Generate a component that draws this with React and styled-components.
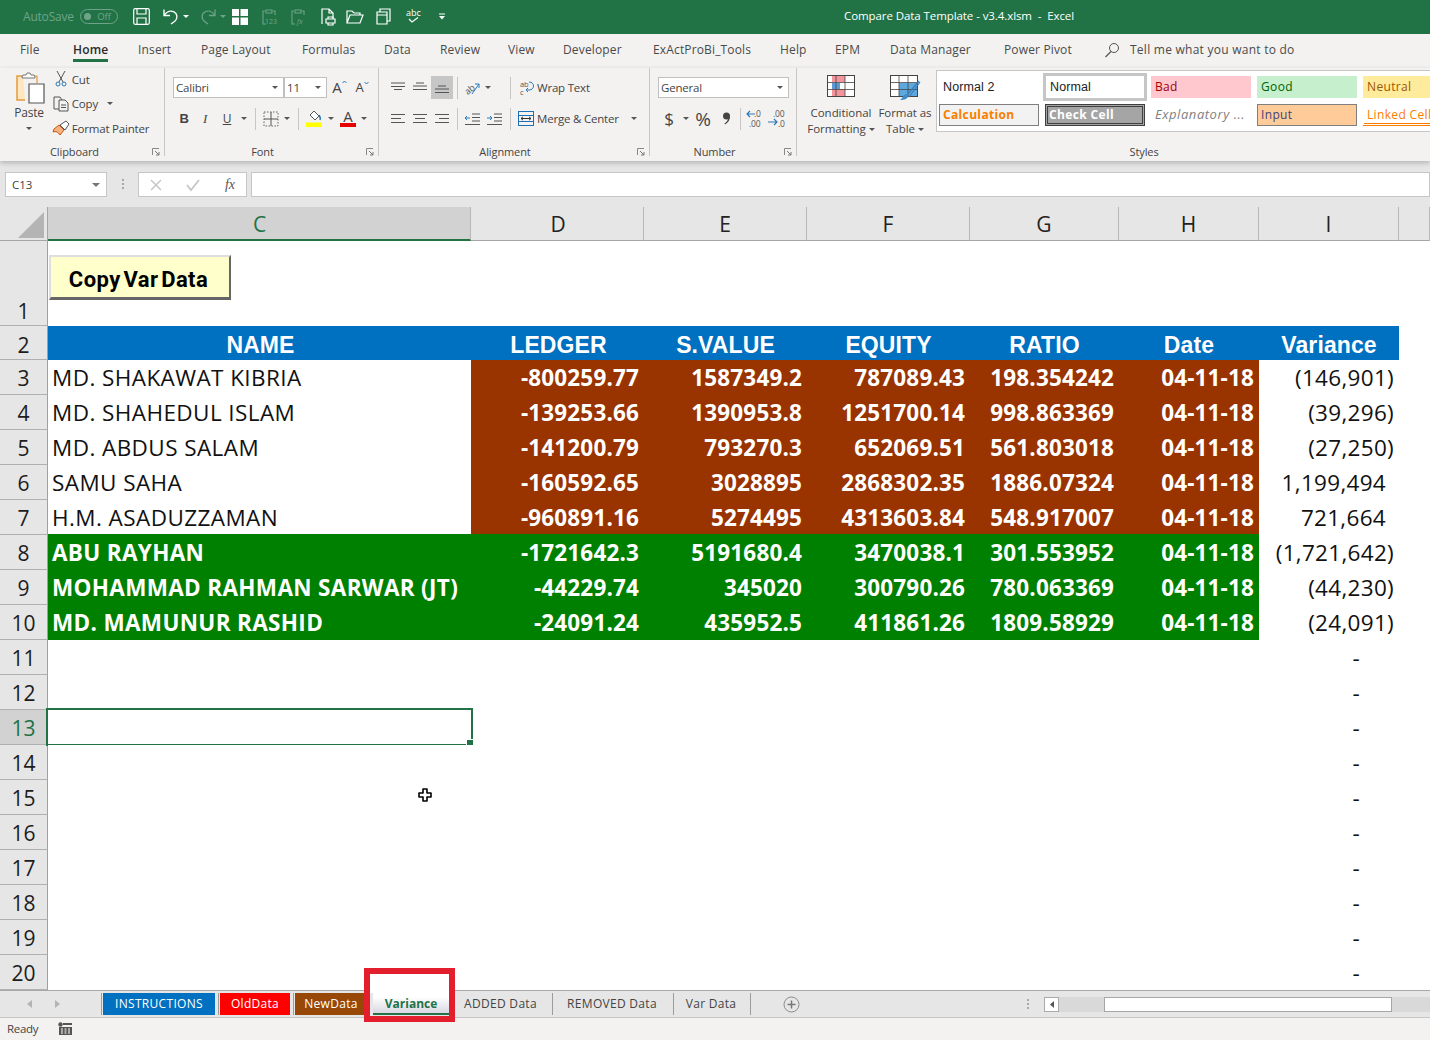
import React from "react";
import styled, { createGlobalStyle } from "styled-components";

const Global = createGlobalStyle`
  html, body { margin: 0; padding: 0; background: #fff; overflow: hidden; }
  * { box-sizing: border-box; }
`;
const UI = `"Open Sans", "Noto Sans", sans-serif`;
const GREEN = "#217346";

const Page = styled.div`
  width: 1430px; height: 1040px; display: flex; flex-direction: column; position: relative; overflow: hidden;
  font-family: ${UI}; color: #444;
`;
const TitleBar = styled.div`
  height: 34px; flex: none; background: ${GREEN}; display: flex; align-items: center; position: relative; padding: 0 0 1px 23px; color: #fff;
`;
const AutoSave = styled.span`font-size: 12px; letter-spacing: -.2px; color: #6fa388; width: 57px;`;
const Toggle = styled.span`
  width: 38px; height: 15px; border: 1px solid #6fa388; border-radius: 8px; display: flex; align-items: center; justify-content: space-between;
  padding: 0 6px 0 3px; font-size: 9.5px; color: #6fa388; margin-right: 15px;
  &::before { content: ""; width: 7px; height: 7px; border-radius: 50%; background: #6fa388; }
`;
const QSlot = styled.span`width: ${p => p.$w}px; flex: none; display: flex; justify-content: center; align-items: center; height: 24px;`;
const DocTitle = styled.div`position: absolute; left: 844px; top: 8px; font-size: 11.5px; letter-spacing: -.08px; white-space: pre; color: #fff;`;
const TabRow = styled.div`height: 34px; flex: none; background: #f3f2f1; display: flex; padding-left: 20px; font-size: 12px;`;
const Tab = styled.div`
  width: ${p => p.$w}px; flex: none; padding-top: 7px; color: ${p => p.$active ? "#2b2b2b" : "#4a4a4a"}; font-weight: ${p => p.$active ? 600 : 400}; white-space: nowrap; letter-spacing: .15px;
  span { display: inline-block; height: 21px; border-bottom: ${p => p.$active ? `3px solid ${GREEN}` : "0"}; }
`;
const SearchBox = styled.div`display: flex; align-items: center; gap: 10px; height: 17px; letter-spacing: .25px; color: #4a4a4a; margin-top: 7px;`;
const Ribbon = styled.div`
  height: 93px; flex: none; background: #f3f2f1; display: flex; box-shadow: 0 2px 5px rgba(0,0,0,.22); position: relative; z-index: 2; font-size: 11.5px; letter-spacing: -.2px;
`;
const Group = styled.div`
  width: ${p => p.$w}px; flex: none; position: relative; display: flex; flex-direction: column; height: 88px;
  border-right: ${p => p.$last ? "0" : "1px solid #c8c6c4"};
`;
const Body = styled.div`flex: none; height: 76px; display: ${p => p.$row ? "flex" : "block"}; padding-top: ${p => p.$pt ?? 9}px;`;
const GLabel = styled.div`
  height: 15px; line-height: 15px; text-align: center; font-size: 11px; letter-spacing: -.1px; color: #444; padding-right: ${p => p.$pr ?? 0}px; white-space: nowrap;
  margin-left: ${p => p.$ml ?? 0}px; width: ${p => p.$lw ? p.$lw + "px" : "auto"};
`;
const Launcher = styled.svg`position: absolute; right: 4px; bottom: 0; width: 8px; height: 8px;`;
const PasteCol = styled.div`width: 52px; flex: none; display: flex; flex-direction: column; align-items: center; padding-left: 6px; font-size: 12px; line-height: 14px;`;
const PasteIcon = styled.span`display: block; height: 31px; margin-left: 4px;`;
const PasteText = styled.span`margin-top: 3px;`;
const PasteCaret = styled.span`margin-top: 7px;`;
const ClipList = styled.div`display: flex; flex-direction: column; margin-top: -5px;`;
const ClipItem = styled.div`height: 24.5px; display: flex; align-items: center; white-space: nowrap; span:first-child { width: 17px; display: flex; justify-content: center; }`;
const CRow = styled.div`display: flex; align-items: center; height: 21px; padding-left: ${p => p.$pl ?? 0}px; margin-bottom: 10px; white-space: nowrap;`;
const Slot = styled.span`
  width: ${p => p.$w}px; flex: none; height: 100%; display: flex; align-items: center; justify-content: ${p => p.$start ? "flex-start" : "center"};
  background: ${p => p.$on ? "#c6c6c6" : "transparent"}; color: #444; white-space: nowrap;
  ${p => p.$on ? "margin-top:-1px;height:23px;" : ""}
`;
const Glyph = styled(Slot)`
  font-size: ${p => p.$size}px; font-weight: ${p => p.$weight ?? 400}; font-family: ${p => p.$family ?? UI};
  font-style: ${p => p.$italic ? "italic" : "normal"}; text-decoration: ${p => p.$under ? "underline" : "none"};
`;
const VSep = styled.span`width: 1px; height: 22px; background: #c8c6c4; display: block;`;
const Drop = styled.div`
  width: ${p => p.$w}px; height: 21px; flex: none; background: #fff; border: 1px solid #c0c0c0; display: flex; align-items: center; justify-content: space-between; padding: 0 5px 0 2px; color: #444; letter-spacing: -.2px;
`;
const Caret = styled.i`display: block; width: 0; height: 0; border-left: ${p => p.$big ? 4 : 3}px solid transparent; border-right: ${p => p.$big ? 4 : 3}px solid transparent; border-top: ${p => p.$big ? 4 : 3}px solid ${p => p.$big ? "#777" : "#555"}; flex: none;`;
const StyleBtn = styled.div`
  width: ${p => p.$w}px; flex: none; display: flex; flex-direction: column; align-items: center; line-height: 16px; font-size: 11.5px; letter-spacing: -.05px; white-space: nowrap; padding-top: 7px; gap: 6px;
  b { font-weight: 400; display: flex; align-items: center; justify-content: center; gap: 3px; }
`;
const BtnText = styled.span`margin-top: ${p => p.$mt}px; text-align: center;`;
const Gallery = styled.div`
  margin-top: 2px; width: 495px; height: 62px; border: 1px solid #c6c6c6; border-right: 0; background: #fff; display: grid;
  grid-template-columns: repeat(5, 100px); column-gap: 6px; row-gap: 6px; padding: 5px 0 0 2px; overflow: hidden; grid-auto-rows: 22px; font-size: 12px; letter-spacing: .35px;
`;
const Sw = styled.div`
  height: 22px; line-height: 20px; padding-left: 3px; white-space: nowrap; overflow: hidden; position: relative;
  background: ${p => p.$bg || "#fff"}; color: ${p => p.$c || "#222"}; border: ${p => p.$bd ? `1px solid ${p.$bd}` : "1px solid transparent"};
  font-weight: ${p => p.$b ? 700 : 400}; font-style: ${p => p.$i ? "italic" : "normal"};
  ${p => p.$i ? "font-size: 13px; letter-spacing: .55px; line-height: 18px;" : ""}
  ${p => p.$ring ? "outline: 3px solid #c6c6c6; outline-offset: 0; margin: 0 1px;" : ""}
  ${p => p.$double ? "box-shadow: inset 0 0 0 1px #a5a5a5, inset 0 0 0 2px #3f3f3f; border: 1px solid #3f3f3f;" : ""}
  ${p => p.$under ? `border-bottom: 3px double ${p.$under}; line-height:20px;` : ""}
  ${p => p.$arial ? `font-family: "Liberation Sans", sans-serif; font-size: 12.5px; letter-spacing: .1px;` : ""}
`;
const FormulaBar = styled.div`height: 46px; flex: none; background: #e6e6e6; display: flex; align-items: flex-start; padding: 11px 0 0 5px;`;
const FBox = styled.div`
  width: ${p => p.$w ? p.$w + "px" : "auto"}; ${p => p.$w ? "flex:none;" : "flex:1;"} height: 25px; background: #fff; border: 1px solid #c6c6c6; display: flex; align-items: center; font-size: 11.5px; color: #444;
  justify-content: ${p => p.$sb ? "space-between" : "flex-start"}; padding: 0 ${p => p.$px ?? 6}px; margin-right: ${p => p.$mr ?? 0}px;
`;
const Fx = styled.span`font: italic 14px "Liberation Serif", serif; color: #555;`;
const Dots = styled.span`width: 2px; height: 10px; margin: 7px 14px 0 15px; flex: none; background: repeating-linear-gradient(#a6a6a6 0 2px, transparent 2px 4px);`;
const Sheet = styled.div`
  height: 783px; flex: none; position: relative; display: grid; background: #fff;
  grid-template-columns: 48px 423px 173px 163px 163px 149px 140px 140px 31px;
  grid-template-rows: 34px 85px 34px repeat(18, 35px);
  overflow: hidden;
`;
const Corner = styled.div`
  background: #e6e6e6; border-bottom: 1px solid #a6a6a6; border-right: 1px solid #a6a6a6; padding: 5px 0 0 18px; 
  &::before { content: ""; display: block; width: 0; height: 0; border-left: 26px solid transparent; border-bottom: 26px solid #b4b4b4; }
`;
const ColHead = styled.div`
  background: ${p => p.$sel ? "#d2d2d2" : "#e6e6e6"}; color: ${p => p.$sel ? GREEN : "#222"}; font-size: 21px; line-height: 34px; text-align: center; padding-left: ${p => p.$pl ?? 0}px;
  border-bottom: ${p => p.$sel ? `2px solid ${GREEN}` : "1px solid #a6a6a6"}; border-right: 1px solid #b8b8b8;
`;
const RowHead = styled.div`
  background: ${p => p.$sel ? "#d2d2d2" : "#e6e6e6"}; color: ${p => p.$sel ? GREEN : "#1d1d1d"}; font-size: 21px; display: flex; align-items: flex-end; justify-content: center; line-height: ${p => p.$low ? 27 : 31}px;
  border-bottom: 1px solid #b0b0b0; border-right: 1px solid ${p => p.$sel ? GREEN : "#a0a0a0"};
`;
const Head = styled.div`
  background: #0070c0; color: #fff; font: 700 23px/38px "Liberation Sans", Arial, sans-serif; text-align: center; letter-spacing: .1px; padding-left: ${p => p.$pl ?? 0}px;
`;
const Cell = styled.div`
  background: ${p => p.$bg || "#fff"}; color: ${p => p.$bg ? "#fff" : "#111"}; font-size: 22.5px; line-height: 35px; font-weight: ${p => p.$bold ? 700 : 400}; letter-spacing: ${p => p.$ls ?? .15}px;
  text-align: ${p => p.$left ? "left" : "right"}; padding: ${p => p.$left ? "0 0 0 4px" : `0 ${p.$pr ?? 5}px 0 0`}; white-space: nowrap; position: relative;
  ${p => p.$span ? `grid-column: span ${p.$span};` : ""}
  ${p => p.$lift ? `box-shadow: 0 -1px 0 ${p.$bg};` : ""}
`;
const Selection = styled.div`
  position: absolute; left: -2px; width: 427px; top: -2px; bottom: -1px; border: 2px solid ${GREEN};
  &::after { content: ""; position: absolute; right: -2px; bottom: -3px; width: 6px; height: 6px; background: ${GREEN}; border: 1px solid #fff; border-right: 0; }
`;
const CopyBtn = styled.div`
  position: absolute; left: 49px; top: 48px; width: 182px; height: 45px; background: #ffffcc; border-top: 2px solid #dedede; border-left: 2px solid #dedede; border-right: 2px solid #666; border-bottom: 3px solid #666; padding-right: 3px;
  font: 700 22px/46px Roboto, sans-serif; color: #000; text-align: center; letter-spacing: .4px; word-spacing: -3px;
`;
const Cursor = styled.svg`position: absolute; left: 418px; top: 581px;`;
const SheetBar = styled.div`
  height: 28px; flex: none; background: #e6e6e6; border-top: 1px solid #a8a8a8; border-bottom: 1px solid #c6c6c6; display: flex; align-items: center; font-size: 12px; letter-spacing: .3px; position: relative;
`;
const Nav = styled.span`width: 28px; flex: none; display: flex; justify-content: center; margin-left: ${p => p.$ml ?? 0}px;`;
const TabSep = styled.span`width: 1px; height: 22px; background: #9c9c9c; flex: none; margin: ${p => p.$m ?? "0 1px 0 0"};`;
const SheetTab = styled.div`
  width: ${p => p.$w}px; height: 22px; flex: none; margin-right: ${p => p.$mr ?? 3}px; padding-right: ${p => p.$pr ?? 0}px; line-height: 22px; text-align: center; white-space: nowrap; background: ${p => p.$bg || "transparent"}; color: ${p => p.$bg ? "#fff" : "#444"};
`;
const ActiveTab = styled(SheetTab)`
  background: linear-gradient(#fff, #fff 20%, #d9d7e2); color: ${GREEN}; font-weight: 700; border-bottom: 2px solid ${GREEN}; letter-spacing: 0; line-height: 22px;
`;
const Highlight = styled.div`
  position: absolute; left: 364px; top: 968px; width: 91px; height: 54px; border: 6px solid #e31e2d; z-index: 4;
  background: linear-gradient(#fff 0, #fff 19px, transparent 19px);
`;
const Scroller = styled.div`
  position: absolute; left: 1044px; top: 6px; right: 0; height: 15px; background: #d9d9d9; display: flex;
`;
const ScrollBtn = styled.span`width: 15px; background: #fff; border: 1px solid #aaa; display: flex; align-items: center; justify-content: center;`;
const Thumb = styled.span`width: 288px; margin-left: 45px; background: #fff; border: 1px solid #a6a6a6; display: block;`;
const BarDots = styled.span`position: absolute; left: 1027px; top: 8px; width: 2px; height: 12px; background: repeating-linear-gradient(#aaa 0 2px, transparent 2px 4px);`;
const Status = styled.div`height: 22px; flex: none; background: #f3f2f1; display: flex; align-items: center; padding: 0 0 2px 7px; font-size: 11.5px; letter-spacing: -.3px; gap: 20px; color: #444;`;
const BigAWrap = styled.span`display: flex; align-items: flex-start; font-size: ${p => p.$s}px; line-height: 1;`;
const FontColWrap = styled.span`display: flex; flex-direction: column; align-items: center; font-size: 15px; line-height: 13px; width: 16px; i { display: block; width: 16px; height: 4px; background: #e60000; }`;
const QCaretEl = styled.span`display: block; width: 0; height: 0; border-left: 3px solid transparent; border-right: 3px solid transparent; border-top: 3px solid ${p => p.$dim ? "#6fa388" : "#fff"};`;
const Flip = styled.span`display: block; height: 17px; transform: scaleX(-1);`;

const Svg = ({ w = 16, h = 16, children, ...r }) => <svg width={w} height={h} viewBox={`0 0 ${w} ${h}`} fill="none" overflow="visible" {...r}>{children}</svg>;
const WHITE = { stroke: "#fff", strokeWidth: 1.2 };
const DIM = { stroke: "#6fa388", strokeWidth: 1.1 };

const SaveI = () => <Svg w={17} h={17}><rect x=".7" y=".7" width="15.6" height="15.6" rx="1.5" {...WHITE} /><path d="M4 1v5h9V1M4 16v-6h9v6" {...WHITE} /></Svg>;
const UndoI = ({ st = WHITE }) => <Svg w={17} h={17}><path d="M2 1.5v6h6" {...st} strokeWidth={st.strokeWidth + .2} /><path d="M2.4 7C5 3 9 2.4 12 3.8c3.5 1.7 4 6.500.8 9.500L9 16" {...st} strokeWidth={st.strokeWidth + .2} /></Svg>;
const GridI = () => <Svg w={16} h={16}><path d="M0 0h7v7H0zM8.500 0H16v7H8.500zM0 8.500h7V16H0zM8.500 8.500H16V16H8.500z" fill="#fff" /></Svg>;
const DimClip = ({ t }) => <Svg w={15} h={17}><path d="M3 3H1v13h3M11 3h2v4M4 2h6v3H4zM7 1.500h0" {...DIM} /><text x={t === "fx" ? 6 : 3} y="15.500" fontSize="7" fontStyle={t === "fx" ? "italic" : "normal"} fill="#6fa388" fontFamily="Open Sans">{t}</text></Svg>;
const PrintI = () => <Svg w={17} h={18}><path d="M2 16V1h7l4 4v5M9 1v4h4" {...WHITE} /><path d="M6 11h9v4H6zM8 15v2h5v-2M8 11V9h5v2" {...WHITE} /></Svg>;
const OpenI = () => <Svg w={18} h={14}><path d="M1 13V1h5l2 2h6v2M1 13h13l3-8H4z" {...WHITE} /></Svg>;
const PagesI = () => <Svg w={15} h={17}><path d="M1 4h10v12H1zM4 4V1h10v12h-3M1 7h10" {...WHITE} /></Svg>;
const Abc = () => <Svg w={15} h={17}><text x="0" y="8" fontSize="9" fill="#fff" fontFamily="Open Sans">abc</text><path d="M3 11l3 3 6-4.500" {...WHITE} /></Svg>;
const QMenu = () => <Svg w={7} h={7}><path d="M0 1h6" stroke="#fff" /><path d="M0 3h6L3 6.500z" fill="#fff" /></Svg>;

const PasteI = () => <Svg w={30} h={31}><path d="M7 4H1v24h8" stroke="#e59a3c" strokeWidth="1.500" fill="#fde6c0" /><path d="M7 4h6v0h8v7" stroke="#e59a3c" strokeWidth="1.200" /><path d="M6 5l1-2h3l1-2h3l1 2h3l1 2v1H6z" fill="#fff" stroke="#777" /><path d="M13 12h15v19H13z" fill="#fff" stroke="#555" strokeWidth="1.200" /></Svg>;
const CutI = () => <Svg w={12} h={16}><path d="M2 0l6 11M10 0L4 11" stroke="#555" /><circle cx="3" cy="13" r="2" stroke="#2a7ab8" /><circle cx="9" cy="13" r="2" stroke="#2a7ab8" /></Svg>;
const CopyI = () => <Svg w={16} h={16}><path d="M6 13H1V1h6l2 3" stroke="#555" /><path d="M6 4h6l3 3v8H6z" stroke="#555" fill="#f3f2f1" /><path d="M8 9h5M8 11.500h5" stroke="#555" /></Svg>;
const PainterI = () => <Svg w={18} h={16}><path d="M2 9l5-4 5 5-4 5C6 12 4 11 1 12z" fill="#f4b183" stroke="#c55a11" /><path d="M8 5l6-4 3 3-4 6z" fill="#fff" stroke="#555" /></Svg>;
const BigA = ({ s, up }) => <BigAWrap $s={s}>A<Svg w={5} h={4}><path d={up ? "M.5 3l2-2 2 2" : "M.5 1l2 2 2-2"} stroke="#2a7ab8" /></Svg></BigAWrap>;
const BordersI = () => <Svg w={16} h={16}><rect x="1" y="1" width="14" height="14" stroke="#666" strokeDasharray="1.500 1.500" /><path d="M1 8h14M8 1v14" stroke="#555" /></Svg>;
const FillI = () => <Svg w={17} h={17}><path d="M8 1l5 5-4 4-5-5z" stroke="#555" fill="#fff" /><path d="M13 5c1 2 2 3 1 5" stroke="#1f6fb5" strokeWidth="1.500" /><rect x="0" y="12.500" width="16" height="4.500" fill="#ffff00" /></Svg>;
const FontColI = () => <FontColWrap>A<i /></FontColWrap>;
const Lines = ({ mode }) => {
  const widths = [14, 10, 14];
  const x = i => mode === "c" ? (14 - widths[i]) / 2 : mode === "r" ? 14 - widths[i] : 0;
  return <Svg w={14} h={12}>{[0, 1, 2].map(i => <path key={i} d={`M${x(i)} ${1.5 + i * 4}h${widths[i]}`} stroke="#555" />)}</Svg>;
};
const VLines = ({ pos }) => <Svg w={14} h={14}>{[0, 1].map(i => <path key={i} d={`M0 ${(pos === "t" ? 2 : pos === "m" ? 5 : 9) + i * 3.5}h14`} stroke="#555" />)}{pos === "t" ? <path d="M3 8.500h8" stroke="#555" /> : pos === "m" ? <path d="M3 2h8" stroke="#555" /> : <path d="M3 6h8" stroke="#555" />}</Svg>;
const OrientI = () => <Svg w={16} h={14}><text x="0" y="12" fontSize="9" fill="#555" transform="rotate(-40 5 8)" fontFamily="Open Sans">ab</text><path d="M8 13L15 3M15 3v4M15 3h-4" stroke="#2a7ab8" /></Svg>;
const Indent = ({ out }) => <Svg w={15} h={12}><path d="M7 1h8M7 4.500h8M7 8h8M0 11.500h15" stroke="#555" /><path d={out ? "M5 5H0M2 3L0 5l2 2" : "M0 5h5M3 3l2 2-2 2"} stroke="#2a7ab8" /></Svg>;
const WrapI = () => <Svg w={15} h={15}><text x="0" y="6.500" fontSize="7.500" fill="#555" fontFamily="Open Sans">ab</text><text x="0" y="15" fontSize="7.500" fill="#555" fontFamily="Open Sans">c</text><path d="M9 2c6 0 6 8 0 8H6M8 8l-2 2 2 2" stroke="#2a7ab8" /></Svg>;
const MergeI = () => <Svg w={16} h={15}><rect x=".5" y=".5" width="15" height="14" stroke="#1f6fb5" /><path d="M.5 4.500h15M.5 10.500h15" stroke="#1f6fb5" /><path d="M3 7.500h10M5 5.800L3 7.500l2 1.700M11 5.800l2 1.700-2 1.700" stroke="#333" /></Svg>;
const CommaI = () => <Svg w={9} h={13}><circle cx="4.500" cy="4" r="3.500" fill="#444" /><path d="M8 4c0 4-2 7-5 8.500l-.5-1C5 10 6 8 6 6z" fill="#444" /></Svg>;
const DecI = ({ inc }) => <Svg w={18} h={19}>{inc ? <><text x="5" y="7.500" fontSize="8.500" fill="#555" fontFamily="Open Sans">.00</text><text x="10" y="17.500" fontSize="8.500" fill="#555" fontFamily="Open Sans">.0</text><path d="M0 13h9M6 10l3 3-3 3" stroke="#2a7ab8" strokeWidth="1.200" /></> : <><text x="8" y="7.500" fontSize="8.500" fill="#555" fontFamily="Open Sans">.0</text><text x="3" y="17.500" fontSize="8.500" fill="#555" fontFamily="Open Sans">.00</text><path d="M1 5h8M4 2L1 5l3 3" stroke="#2a7ab8" strokeWidth="1.200" /></>}</Svg>;
const CondI = () => <Svg w={28} h={22}><rect x=".5" y=".5" width="27" height="21" fill="#fff" stroke="#444" /><path d="M5 1h13v6H5zM5 14h13v7H5z" fill="#f4949c" /><path d="M5 8h8v6H5z" fill="#5b9bd5" /><path d="M.5 7.500h27M.5 14.500h27M9 1v20M18 1v20" stroke="#444" strokeWidth=".8" /></Svg>;
const TableI = () => <Svg w={31} h={27}><rect x=".5" y=".5" width="27" height="21" fill="#fff" stroke="#444" /><path d="M9 8h18v13H9z" fill="#5ea8e0" /><path d="M.5 7.500h27M.5 14.500h27M9 1v20M18 1v20" stroke="#444" strokeWidth=".8" /><path d="M29 6L17 20M30 7L19 22" stroke="#3d7cb8" strokeWidth="1.200" /><path d="M14 20c3-2 5 0 4 2-2 3-6 3-8 3 2-1 2-3 4-5z" fill="#3d8bcc" /></Svg>;
const SearchI = () => <Svg w={16} h={16}><circle cx="10" cy="6" r="4.500" stroke="#555" /><path d="M7 9.500L1.500 15" stroke="#555" strokeWidth="1.300" /></Svg>;
const LaunchI = () => <Launcher viewBox="0 0 8 8"><path d="M.5 7V.5H7" stroke="#888" fill="none" /><path d="M3 3l4 4M7 4v3H4" stroke="#777" fill="none" /></Launcher>;
const CalcI = () => <Svg w={14} h={13}><circle cx="2.500" cy="2.500" r="2.200" fill="#555" /><path d="M5 1h9v2H5zM1 5h13v8H1z" fill="#555" /><path d="M3 7h2M6.500 7h2M10 7h2M3 9h2M6.500 9h2M10 9h2M3 11h2M6.500 11h2M10 11h2" stroke="#fff" /></Svg>;

const QRow = () => (
  <>
    <AutoSave>AutoSave</AutoSave>
    <Toggle>Off</Toggle>
    <QSlot $w={17}><SaveI /></QSlot>
    <QSlot $w={12} />
    <QSlot $w={17}><UndoI /></QSlot>
    <QSlot $w={14}><QCaretEl /></QSlot>
    <QSlot $w={8} />
    <QSlot $w={15}><Flip><UndoI st={DIM} /></Flip></QSlot>
    <QSlot $w={14}><QCaretEl $dim /></QSlot>
    <QSlot $w={2} />
    <QSlot $w={16}><GridI /></QSlot>
    <QSlot $w={14} />
    <QSlot $w={15}><DimClip t="123" /></QSlot>
    <QSlot $w={14} />
    <QSlot $w={15}><DimClip t="fx" /></QSlot>
    <QSlot $w={14} />
    <QSlot $w={17}><PrintI /></QSlot>
    <QSlot $w={9} />
    <QSlot $w={18}><OpenI /></QSlot>
    <QSlot $w={12} />
    <QSlot $w={15}><PagesI /></QSlot>
    <QSlot $w={15} />
    <QSlot $w={15}><Abc /></QSlot>
    <QSlot $w={17} />
    <QSlot $w={8}><QMenu /></QSlot>
  </>
);

const TABS = [["File", 53], ["Home", 65, true], ["Insert", 63], ["Page Layout", 101], ["Formulas", 82], ["Data", 56], ["Review", 68], ["View", 55], ["Developer", 90], ["ExActProBi_Tools", 127], ["Help", 55], ["EPM", 55], ["Data Manager", 114], ["Power Pivot", 100]];

const ROWS = [
  ["MD. SHAKAWAT KIBRIA", "-800259.77", "1587349.2", "787089.43", "198.354242", "(146,901)", 5, "b"],
  ["MD. SHAHEDUL ISLAM", "-139253.66", "1390953.8", "1251700.14", "998.863369", "(39,296)", 5, "b"],
  ["MD. ABDUS SALAM", "-141200.79", "793270.3", "652069.51", "561.803018", "(27,250)", 5, "b"],
  ["SAMU SAHA", "-160592.65", "3028895", "2868302.35", "1886.07324", "1,199,494", 13, "b"],
  ["H.M. ASADUZZAMAN", "-960891.16", "5274495", "4313603.84", "548.917007", "721,664", 13, "b"],
  ["ABU RAYHAN", "-1721642.3", "5191680.4", "3470038.1", "301.553952", "(1,721,642)", 5, "g"],
  ["MOHAMMAD RAHMAN SARWAR (JT)", "-44229.74", "345020", "300790.26", "780.063369", "(44,230)", 5, "g"],
  ["MD. MAMUNUR RASHID", "-24091.24", "435952.5", "411861.26", "1809.58929", "(24,091)", 5, "g"],
];
const BROWN = "#993300", DG = "#008000";

export default function App() {
  return (
    <Page>
      <Global />
      <TitleBar>
        <QRow />
        <DocTitle>{"Compare Data Template - v3.4.xlsm  -  Excel"}</DocTitle>
      </TitleBar>
      <TabRow>
        {TABS.map(([t, w, a]) => <Tab key={t} $w={w} $active={a}><span>{t}</span></Tab>)}
        <SearchBox><SearchI />Tell me what you want to do</SearchBox>
      </TabRow>
      <Ribbon>
        <Group $w={165}>
          <Body $row $pt={4}>
            <PasteCol>
              <PasteIcon><PasteI /></PasteIcon>
              <PasteText>Paste</PasteText>
              <PasteCaret><Caret /></PasteCaret>
            </PasteCol>
            <ClipList>
              <ClipItem><span><CutI /></span>&nbsp;Cut</ClipItem>
              <ClipItem><span><CopyI /></span>&nbsp;Copy<Slot $w={24}><Caret /></Slot></ClipItem>
              <ClipItem><span><PainterI /></span>&nbsp;Format Painter</ClipItem>
            </ClipList>
          </Body>
          <GLabel $pr={15}>Clipboard</GLabel><LaunchI />
        </Group>
        <Group $w={214}>
          <Body>
            <CRow $pl={8}>
              <Drop $w={111}>Calibri<Caret /></Drop><Drop $w={43}>11<Caret /></Drop>
              <Slot $w={25}><BigA s={15} up /></Slot><Slot $w={20}><BigA s={13} /></Slot>
            </CRow>
            <CRow $pl={9}>
              <Glyph $w={20} $size={13} $weight={700} $family={`"Liberation Sans", sans-serif`}>B</Glyph>
              <Glyph $w={22} $size={13} $italic $family={`"Liberation Serif", serif`}>I</Glyph>
              <Glyph $w={22} $size={12} $under>U</Glyph>
              <Slot $w={12}><Caret /></Slot><Slot $w={10}><VSep /></Slot>
              <Slot $w={22}><BordersI /></Slot><Slot $w={10}><Caret /></Slot><Slot $w={12}><VSep /></Slot>
              <Slot $w={20}><FillI /></Slot><Slot $w={13}><Caret /></Slot>
              <Slot $w={22}><FontColI /></Slot><Slot $w={10}><Caret /></Slot>
            </CRow>
          </Body>
          <GLabel $pr={18}>Font</GLabel><LaunchI />
        </Group>
        <Group $w={271}>
          <Body>
            <CRow $pl={8}>
              <Slot $w={22}><VLines pos="t" /></Slot><Slot $w={22}><VLines pos="m" /></Slot><Slot $w={22} $on><VLines pos="b" /></Slot>
              <Slot $w={8}><VSep /></Slot>
              <Slot $w={22}><OrientI /></Slot><Slot $w={10}><Caret /></Slot>
              <Slot $w={12} /><Slot $w={10}><VSep /></Slot><Slot $w={4} />
              <Slot $w={16}><WrapI /></Slot><Slot $w={2} />Wrap Text
            </CRow>
            <CRow $pl={8}>
              <Slot $w={22}><Lines mode="l" /></Slot><Slot $w={22}><Lines mode="c" /></Slot><Slot $w={22}><Lines mode="r" /></Slot>
              <Slot $w={8}><VSep /></Slot>
              <Slot $w={22}><Indent out /></Slot><Slot $w={22}><Indent /></Slot>
              <Slot $w={10}><VSep /></Slot><Slot $w={3} />
              <Slot $w={16}><MergeI /></Slot><Slot $w={3} />
              <Slot $w={88} $start>Merge &amp; Center</Slot><Slot $w={18}><Caret /></Slot>
            </CRow>
          </Body>
          <GLabel $pr={18}>Alignment</GLabel><LaunchI />
        </Group>
        <Group $w={147}>
          <Body>
            <CRow $pl={8}><Drop $w={131}>General<Caret /></Drop></CRow>
            <CRow $pl={8}>
              <Glyph $w={22} $size={17}>$</Glyph><Slot $w={12}><Caret /></Slot>
              <Glyph $w={22} $size={19}>%</Glyph>
              <Slot $w={24}><CommaI /></Slot>
              <Slot $w={4}><VSep /></Slot><Slot $w={2} />
              <Slot $w={22}><DecI /></Slot><Slot $w={22}><DecI inc /></Slot>
            </CRow>
          </Body>
          <GLabel $pr={17}>Number</GLabel><LaunchI />
        </Group>
        <Group $w={633} $last>
          <Body $row $pt={0}>
            <Slot $w={11} />
            <StyleBtn $w={66}><CondI /><BtnText $mt={2}>Conditional<br /><b>Formatting<Caret /></b></BtnText></StyleBtn>
            <StyleBtn $w={62}><TableI /><BtnText $mt={-3}>Format as<br /><b>Table<Caret /></b></BtnText></StyleBtn>
            <Gallery>
              <Sw $arial>Normal 2</Sw><Sw $ring $arial>Normal</Sw><Sw $bg="#ffc7ce" $c="#9c0006">Bad</Sw><Sw $bg="#c6efce" $c="#006100">Good</Sw><Sw $bg="#ffeb9c" $c="#9c5700">Neutral</Sw>
              <Sw $bg="#f2f2f2" $c="#fa7d00" $bd="#7f7f7f" $b>Calculation</Sw><Sw $bg="#a5a5a5" $c="#fff" $b $double>Check Cell</Sw><Sw $c="#7f7f7f" $i>Explanatory ...</Sw><Sw $bg="#ffcc99" $c="#3f3f76" $bd="#7f7f7f">Input</Sw><Sw $c="#fa7d00" $under="#fa7d00">Linked Cell</Sw>
            </Gallery>
          </Body>
          <GLabel $ml={332} $lw={30}>Styles</GLabel>
        </Group>
      </Ribbon>
      <FormulaBar>
        <FBox $w={102} $sb>C13<Caret $big /></FBox>
        <Dots />
        <FBox $w={109} $mr={4} $sb $px={11}>
          <Svg w={12} h={12}><path d="M1 1l10 10M11 1L1 11" stroke="#c6c6c6" strokeWidth="1.500" /></Svg>
          <Svg w={14} h={12}><path d="M1 6l4 5 8-10" stroke="#c6c6c6" strokeWidth="1.800" /></Svg>
          <Fx>fx</Fx>
        </FBox>
        <FBox />
      </FormulaBar>
      <Sheet>
        <Corner />
        <ColHead $sel $pl={1}>C</ColHead>
        {["D", "E", "F", "G", "H", "I"].map((c, i) => <ColHead key={c} $pl={i === 0 ? 2 : 0}>{c}</ColHead>)}
        <ColHead />
        <RowHead $low>1</RowHead>
        <Cell $span={8} />
        <RowHead $low>2</RowHead>
        {["NAME", "LEDGER", "S.VALUE", "EQUITY", "RATIO", "Date", "Variance"].map((h, i) => <Head key={h} $pl={i < 2 ? 2 : 0}>{h}</Head>)}
        <Cell />
        {ROWS.map((r, i) => {
          const isG = r[7] === "g";
          const bg = isG ? DG : BROWN;
          return (
            <React.Fragment key={r[0]}>
              <RowHead>{i + 3}</RowHead>
              <Cell $left $bg={isG ? DG : undefined} $bold={isG} $lift={isG} $ls={isG ? .33 : .42}>{r[0]}</Cell>
              {[r[1], r[2], r[3], r[4], "04-11-18"].map((v, k) => <Cell key={k} $bg={bg} $bold $lift={isG}>{v}</Cell>)}
              <Cell $pr={r[6]} $ls={.3}>{r[5]}</Cell>
              <Cell />
            </React.Fragment>
          );
        })}
        {Array.from({ length: 10 }, (_, i) => (
          <React.Fragment key={i}>
            <RowHead $sel={i === 2}>{i + 11}</RowHead>
            <Cell $span={6}>{i === 2 && <Selection />}</Cell>
            <Cell $pr={39}>-</Cell>
            <Cell />
          </React.Fragment>
        ))}
        <CopyBtn>Copy Var Data</CopyBtn>
        <Cursor width="15" height="15" viewBox="0 0 15 15"><path d="M5 1h4v4h4v4H9v4H5V9H1V5h4z" fill="#fff" stroke="#000" strokeWidth="1.600" strokeLinejoin="round" /></Cursor>
      </Sheet>
      <SheetBar>
        <Nav $ml={15}><Svg w={5} h={8}><path d="M5 0v8L0 4z" fill="#b4b4b4" /></Svg></Nav>
        <Nav><Svg w={5} h={8}><path d="M0 0v8l5-4z" fill="#b4b4b4" /></Svg></Nav>
        <TabSep $m="0 1px 0 30px" />
        <SheetTab $w={112} $bg="#0070c0">INSTRUCTIONS</SheetTab>
        <TabSep />
        <SheetTab $w={70} $bg="#ff0000">OldData</SheetTab>
        <TabSep />
        <SheetTab $w={72} $bg="#974706" $mr={6}>NewData</SheetTab>
        <ActiveTab $w={76} $mr={0}>Variance</ActiveTab>
        <SheetTab $w={103} $mr={0}>ADDED Data</SheetTab>
        <TabSep />
        <SheetTab $w={119} $mr={0} $pr={3}>REMOVED Data</SheetTab>
        <TabSep />
        <SheetTab $w={75} $mr={0} $pr={3}>Var Data</SheetTab>
        <TabSep $m="0 32px 0 0" />
        <Svg w={17} h={17}><circle cx="8.500" cy="8.500" r="7.500" stroke="#8a8a8a" /><path d="M8.500 4.500v8M4.500 8.500h8" stroke="#777" strokeWidth="1.500" /></Svg>
        <BarDots />
        <Scroller>
          <ScrollBtn><Svg w={4} h={7}><path d="M4 0v7L0 3.500z" fill="#555" /></Svg></ScrollBtn>
          <Thumb />
        </Scroller>
      </SheetBar>
      <Status>Ready<CalcI /></Status>
      <Highlight />
    </Page>
  );
}
